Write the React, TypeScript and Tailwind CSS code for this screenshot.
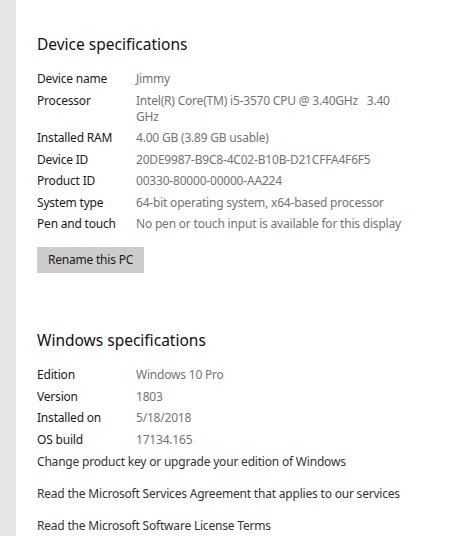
const deviceSpecs = [
  { label: 'Device name', value: ['Jimmy'] },
  { label: 'Processor', value: ['Intel(R) Core(TM) i5-3570 CPU @ 3.40GHz\u00a0\u00a0 3.40', 'GHz'] },
  { label: 'Installed RAM', value: ['4.00 GB (3.89 GB usable)'] },
  { label: 'Device ID', value: ['20DE9987-B9C8-4C02-B10B-D21CFFA4F6F5'] },
  { label: 'Product ID', value: ['00330-80000-00000-AA224'] },
  { label: 'System type', value: ['64-bit operating system, x64-based processor'] },
  { label: 'Pen and touch', value: ['No pen or touch input is available for this display'] },
];

const windowsSpecs = [
  { label: 'Edition', value: ['Windows 10 Pro'] },
  { label: 'Version', value: ['1803'] },
  { label: 'Installed on', value: ['5/18/2018'] },
  { label: 'OS build', value: ['17134.165'] },
];

function SpecList({ rows }: { rows: { label: string; value: string[] }[] }) {
  return (
    <div className="flex flex-col gap-[5.5px]">
      {rows.map((row) => (
        <div key={row.label} className="flex leading-[16px]">
          <div className="w-[99px] shrink-0 text-[#1a1a1a]">{row.label}</div>
          <div className="whitespace-nowrap text-[#737373]">
            {row.value.map((line) => (
              <div key={line}>{line}</div>
            ))}
          </div>
        </div>
      ))}
    </div>
  );
}

export default function App() {
  return (
    <div
      className="flex h-[536px] w-[474px] overflow-hidden bg-white text-[12px] tracking-[-0.2px]"
      style={{ fontFamily: '"Noto Sans", "Open Sans", sans-serif' }}
    >
      {/* left rail */}
      <div className="w-[16px] shrink-0 bg-[#e6e6e6]" />

      <div className="flex-1 pl-[21px] pt-[33px]">
        <h2 className="text-[15.5px] leading-[22px] tracking-normal text-[#111]">Device specifications</h2>

        <div className="mt-[16px]">
          <SpecList rows={deviceSpecs} />
        </div>

        <button className="mt-[15px] h-[26px] w-[107px] bg-[#cccccc] text-[12px] text-[#1a1a1a]">
          Rename this PC
        </button>

        <h2 className="mt-[56px] text-[15.5px] leading-[22px] tracking-normal text-[#111]">
          Windows specifications
        </h2>

        <div className="mt-[16px]">
          <SpecList rows={windowsSpecs} />
        </div>

        <div className="mt-[6px] flex flex-col gap-[16px] whitespace-nowrap leading-[16px] text-[#333]">
          <div>Change product key or upgrade your edition of Windows</div>
          <div>Read the Microsoft Services Agreement that applies to our services</div>
          <div>Read the Microsoft Software License Terms</div>
        </div>
      </div>
    </div>
  );
}
